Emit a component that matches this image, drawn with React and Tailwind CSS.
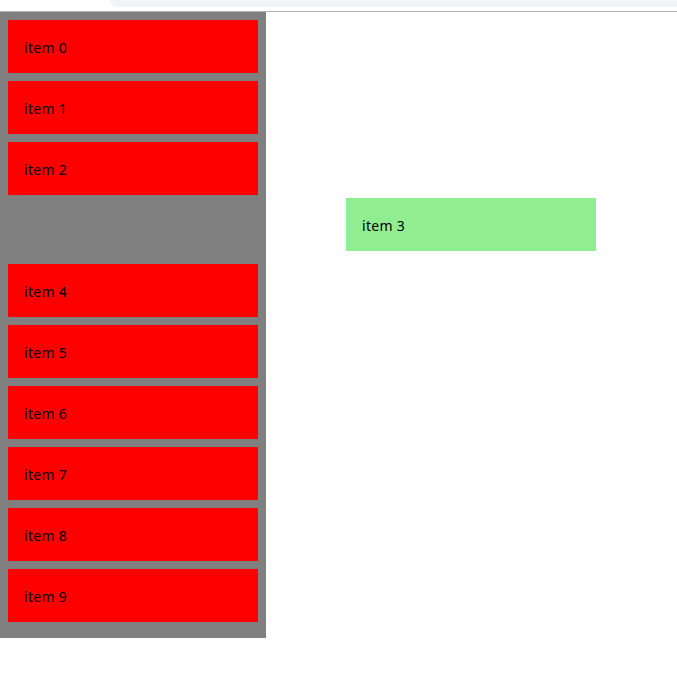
import React from "react";

const items = [0, 1, 2, 3, 4, 5, 6, 7, 8, 9];

export default function App() {
  return (
    <div className="relative min-h-[690px] bg-white text-sm text-black" style={{ fontFamily: '"Noto Sans", "Open Sans", sans-serif' }}>
      {/* browser chrome edge */}
      <div className="h-[11px] bg-white">
        <div className="ml-[110px] h-[7px] rounded-bl-[10px] bg-[#f1f3f4]" />
      </div>
      <div className="h-px bg-[#b4b4b4]" />

      <div className="flex">
        {/* Droppable list */}
        <div className="w-[266px] bg-[#808080] p-2">
          {items.map((i) =>
            i === 3 ? (
              <div key={i} className="mb-2 h-[53px]" />
            ) : (
              <div key={i} className="mb-2 bg-[#ff0000] px-4 pt-[17px] pb-[15px] leading-[21px] tracking-[0.3px]">
                item {i}
              </div>
            )
          )}
        </div>
      </div>

      {/* dragging item */}
      <div className="absolute left-[346px] top-[198px] w-[250px] bg-[#90ee90] px-4 pt-[17px] pb-[15px] leading-[21px] tracking-[0.3px]">
        item 3
      </div>
    </div>
  );
}
